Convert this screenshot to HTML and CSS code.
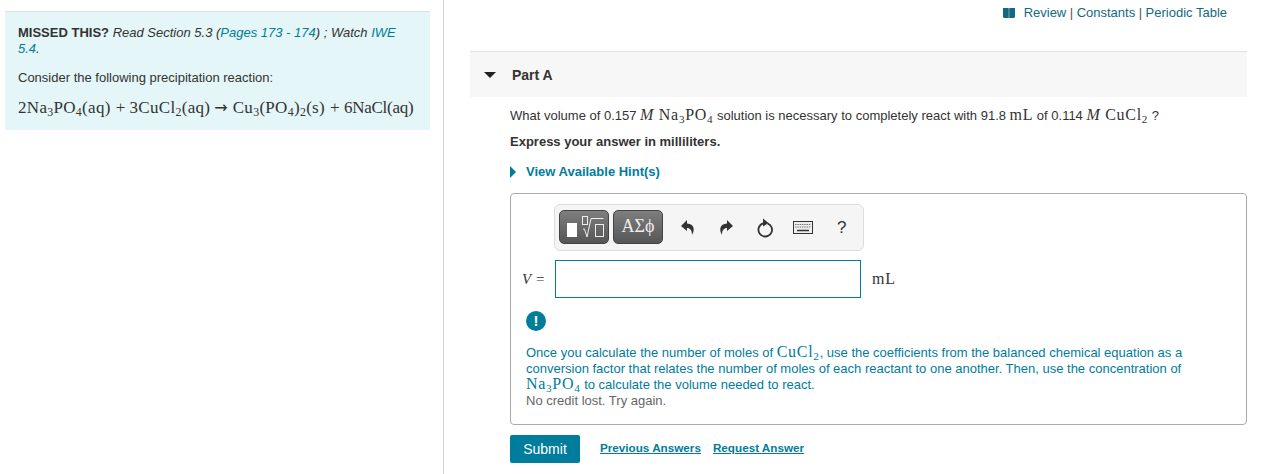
FILE: index.html
```html
<!DOCTYPE html>
<html lang="en">
<head>
<meta charset="utf-8">
<title>Part A</title>
<link rel="stylesheet" href="styles.css">
</head>
<body>
<div class="page">
  <aside class="left">
    <div class="panel">
      <p class="missed"><b>MISSED THIS?</b> <i>Read Section 5.3 (<a href="#">Pages 173 - 174</a>) ; Watch <a href="#">IWE</a> <a href="#">5.4</a>.</i></p>
      <p class="consider">Consider the following precipitation reaction:</p>
      <p class="reaction math">2Na<sub>3</sub>PO<sub>4</sub>(aq)<span class="op">+</span>3CuCl<sub>2</sub>(aq)<span class="arrow">→</span>Cu<sub>3</sub>(PO<sub>4</sub>)<sub>2</sub>(s)<span class="op">+</span><span class="tight">6NaCl(aq)</span></p>
    </div>
  </aside>
  <main class="right">
    <nav class="top">
      <svg class="book" width="12" height="10" viewBox="0 0 12 10"><path d="M0 0h5.300c.3 0 .5.300.5.600V10H1L0 9zM12 0H6.700c-.3 0-.5.300-.5.600V10h4.800l1-1z"/></svg>
      <a href="#">Review</a><span class="sep">|</span><a href="#">Constants</a><span class="sep">|</span><a href="#">Periodic Table</a>
    </nav>
    <header class="part">
      <span class="caret"></span>
      <h2>Part A</h2>
    </header>
    <section class="body">
      <p class="question">What volume of 0.157 <span class="math"><i>M</i> Na<sub>3</sub>PO<sub>4</sub></span> solution is necessary to completely react with 91.8 <span class="math">mL</span> of 0.114 <span class="math"><i>M</i> CuCl<sub>2</sub></span> ?</p>
      <p class="express">Express your answer in milliliters.</p>
      <p class="hint"><span class="hint-caret"></span><a href="#">View Available Hint(s)</a></p>
      <div class="box">
        <div class="toolbar-row">
          <div class="toolbar">
            <button class="tbtn tbtn-root" type="button">
              <svg width="45" height="30" viewBox="0 0 45 30"><rect x="5" y="11" width="10" height="14" fill="#fff"/><rect x="20.500" y="4.500" width="5" height="8" fill="none" stroke="#eee"/><path d="M21 17h1.500l2.500 8L29 6.500h12.500" fill="none" stroke="#eee"/><rect x="33.500" y="12.500" width="8" height="12" fill="none" stroke="#eee"/></svg>
            </button>
            <button class="tbtn tbtn-greek" type="button">ΑΣϕ</button>
            <svg class="tool tool-undo" width="14" height="16" viewBox="0 0 14 16"><path d="M6 0 0 6l6 5V8c3 0 5 2 5 7 3-5 2.500-11-5-11.500z" fill="#333"/></svg>
            <svg class="tool tool-redo" width="14" height="16" viewBox="0 0 14 16"><path d="M8 0l6 6-6 5V8c-3 0-5 2-5 7C0 10 .5 4 8 3.500z" fill="#333"/></svg>
            <svg class="tool tool-reset" width="18" height="20" viewBox="0 0 18 20"><path d="M11.500 5.300a6.800 6.800 0 1 1-4.500 0" fill="none" stroke="#333" stroke-width="1.800"/><path d="M7 0.500 12.500 5 7 8.500z" fill="#333"/></svg>
            <svg class="tool tool-kbd" width="20" height="13" viewBox="0 0 20 13"><rect x=".5" y=".5" width="19" height="12" fill="#eee" stroke="#333"/><path d="M2 3.500h16M2 6h16" stroke="#777" stroke-width="1.200" stroke-dasharray="1.500 .8"/><path d="M4 9.500h12" stroke="#333" stroke-width="1.500"/></svg>
            <span class="tool-help">?</span>
          </div>
        </div>
        <div class="answer-row">
          <label class="var"><i>V</i> =</label>
          <div class="input"></div>
          <span class="unit math">mL</span>
        </div>
        <div class="alert-icon">!</div>
        <p class="feedback">Once you calculate the number of moles of <span class="math">CuCl<sub>2</sub></span>, use the coefficients from the balanced chemical equation as a conversion factor that relates the number of moles of each reactant to one another. Then, use the concentration of <span class="math">Na<sub>3</sub>PO<sub>4</sub></span> to calculate the volume needed to react.</p>
        <p class="credit">No credit lost. Try again.</p>
      </div>
      <div class="actions">
        <button class="submit" type="button">Submit</button>
        <a href="#">Previous Answers</a>
        <a href="#">Request Answer</a>
      </div>
    </section>
  </main>
</div>
</body>
</html>
```
FILE: styles.css
```css
* { box-sizing: border-box; }
html, body { margin: 0; padding: 0; }
body {
  font-family: "Liberation Sans", Arial, sans-serif;
  font-size: 13px;
  line-height: 16px;
  color: #333;
  background: #fff;
  overflow: hidden;
}
p { margin: 0; }
a { color: #007c9c; text-decoration: none; }
.math { font-family: "Liberation Serif", "Times New Roman", serif; font-size: 16px; line-height: 0; letter-spacing: 0.7px; }
sub { font-size: 0.7em; line-height: 0; vertical-align: -0.25em; }

.page { display: flex; height: 474px; }
.left { width: 444px; flex: none; border-right: 1px solid #d4d4d4; padding: 11px 13px 0 5px; }
.panel { height: 119px; background: #e4f6f7; border-top: 1px solid #e0e0e0; padding: 13px 13px 0; }
.missed { width: 380px; }
.consider { margin-top: 13px; }
.reaction { margin-top: 12px; font-size: 17px; line-height: 20px; letter-spacing: 0.3px; white-space: nowrap; }
.op { margin: 0 4px 0 5px; }
.arrow { margin: 0 5px 0 4px; font-family: "DejaVu Sans", sans-serif; font-size: 16px; letter-spacing: 0; }
.tight { letter-spacing: -0.25px; }

.right { flex: 1; padding-left: 26px; padding-right: 25px; }
.top { height: 51px; padding: 4px 20px 30px 0; display: flex; justify-content: flex-end; align-items: center; }
.top a { color: #136a80; }
.book { fill: #136a80; margin-right: 9px; }
.sep { margin: 0 3.500px; color: #555; }

.part { height: 46px; background: #f7f7f7; border-top: 1px solid #e0e0e0; display: flex; align-items: center; padding-left: 14px; }
.caret { width: 0; height: 0; border-left: 6px solid transparent; border-right: 6px solid transparent; border-top: 6px solid #222; margin-right: 16px; }
.part h2 { margin: 0; font-size: 14px; font-weight: bold; color: #333; }

.body { padding: 10px 0 0 40px; }
.question { line-height: 17px; white-space: nowrap; }
.express { font-weight: bold; margin-top: 10px; }
.hint { margin-top: 14px; font-weight: bold; display: flex; align-items: center; }
.hint-caret { width: 0; height: 0; border-top: 6px solid transparent; border-bottom: 6px solid transparent; border-left: 6px solid #007c9c; margin-right: 10px; }

.box { margin-top: 13px; height: 232px; border: 1px solid #aaa; border-radius: 4px; padding: 10px 15px 0; }
.toolbar-row { padding-left: 28px; }
.toolbar { width: 310px; height: 47px; background: #f5f5f5; border: 1px solid #ddd; border-radius: 6px; display: flex; align-items: center; padding-left: 4px; }
.tbtn { height: 34px; border: 1px solid #444; border-radius: 5px; background: linear-gradient(#7e7e7e, #565656); color: #eee; padding: 0; margin: 0 0 2px; }
.tbtn-root { width: 50px; margin-right: 4px; display: flex; align-items: center; justify-content: center; }
.tbtn-greek { width: 50px; font-family: "Liberation Serif", serif; font-size: 18px; }
.tool { flex: none; }
.tool-undo { margin-left: 18px; }
.tool-redo { margin-left: 24px; }
.tool-reset { margin-left: 23px; }
.tool-kbd { margin-left: 19px; }
.tool-help { margin-left: 24px; font-size: 17px; color: #333; }

.answer-row { display: flex; align-items: center; margin-top: 9px; }
.var { width: 33px; margin-left: -4px; font-family: "Liberation Serif", serif; font-size: 15px; letter-spacing: 0.5px; white-space: nowrap; }
.input { width: 306px; height: 38px; border: 1px solid #007c9c; background: #fff; }
.unit { margin-left: 11px; font-size: 16px; }

.alert-icon { width: 20px; height: 20px; margin-top: 13px; border-radius: 50%; background: #007c9c; color: #fff; font-weight: bold; font-size: 15px; line-height: 20px; text-align: center; }
.feedback { margin-top: 14px; color: #007c9c; width: 660px; }
.credit { color: #666; }

.actions { margin-top: 10px; display: flex; align-items: center; font-weight: bold; font-size: 11.700px; }
.actions a { text-decoration: underline; margin: -2px 0 0 12px; }
.submit { width: 70px; height: 28px; background: #007c9c; color: #fff; border: 0; border-radius: 2px; font-family: "Liberation Sans", sans-serif; font-size: 14px; margin-right: 8px; padding: 0; }
```
